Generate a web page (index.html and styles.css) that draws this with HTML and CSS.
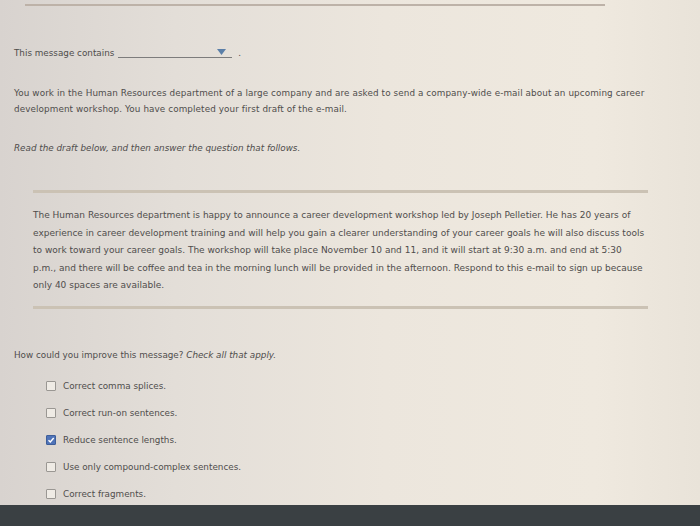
FILE: index.html
```html
<!DOCTYPE html>
<html>
<head>
<meta charset="utf-8">
<link rel="stylesheet" href="styles.css">
</head>
<body>
<div class="screen">
  <div class="page">
    <div class="top-rule"></div>
    <p class="prompt">This message contains <span class="select"><svg class="caret" width="9" height="6" viewBox="0 0 9 6"><path d="M0 0h9L4.5 6z" fill="#5b7fa8"/></svg></span> .</p>
    <p class="intro">You work in the Human Resources department of a large company and are asked to send a company-wide e-mail about an upcoming career development workshop. You have completed your first draft of the e-mail.</p>
    <p class="instr">Read the draft below, and then answer the question that follows.</p>
    <div class="draft">
      <div class="rule"></div>
      <p class="email">The Human Resources department is happy to announce a career development workshop led by Joseph Pelletier. He has 20 years of experience in career development training and will help you gain a clearer understanding of your career goals he will also discuss tools to work toward your career goals. The workshop will take place November 10 and 11, and it will start at 9:30 a.m. and end at 5:30 p.m., and there will be coffee and tea in the morning lunch will be provided in the afternoon. Respond to this e-mail to sign up because only 40 spaces are available.</p>
      <div class="rule"></div>
    </div>
    <p class="question">How could you improve this message? <em>Check all that apply.</em></p>
    <ul class="options">
      <li><span class="box"></span>Correct comma splices.</li>
      <li><span class="box"></span>Correct run-on sentences.</li>
      <li><span class="box checked"><svg width="8" height="8" viewBox="0 0 8 8"><path d="M1.5 4.2l1.8 1.8L6.7 2" fill="none" stroke="#fff" stroke-width="1.4"/></svg></span>Reduce sentence lengths.</li>
      <li><span class="box"></span>Use only compound-complex sentences.</li>
      <li><span class="box"></span>Correct fragments.</li>
    </ul>
  </div>
  <div class="bezel"></div>
</div>
</body>
</html>
```
FILE: styles.css
```css
html, body {
  margin: 0;
  padding: 0;
}
body {
  width: 700px;
  height: 526px;
  overflow: hidden;
  font-family: "DejaVu Sans", Verdana, sans-serif;
  color: #4f4d4c;
}
.screen {
  display: flex;
  flex-direction: column;
  height: 526px;
}
.page {
  flex: 1;
  min-height: 0;
  overflow: hidden;
  background: linear-gradient(to right, #d8d3cf 0%, #e3ded8 25%, #ece6dd 55%, #efe9df 85%, #e9e3d9 100%);
  padding: 0 0 0 14px;
  font-size: 8.8px;
}
.top-rule {
  margin: 4px 95px 0 11px;
  height: 2px;
  background: #bdb2a8;
}
p {
  margin: 0;
}
.prompt {
  margin-top: 40px;
  display: flex;
  align-items: flex-end;
  gap: 2px;
}
.select {
  display: inline-flex;
  justify-content: flex-end;
  align-items: center;
  width: 114px;
  height: 12px;
  border-bottom: 1px solid #7d7c7c;
  margin: 0 4px 0 2px;
  padding-right: 6px;
  box-sizing: border-box;
}
.intro {
  margin-top: 27px;
  line-height: 16px;
  width: 650px;
  letter-spacing: 0.1px;
}
.instr {
  margin-top: 26px;
  font-style: italic;
}
.draft {
  margin: 37px 52px 0 19px;
}
.rule {
  height: 3px;
  background: #cbc2b4;
}
.email {
  margin: 14px 3px 11px 0;
  line-height: 17.6px;
  font-size: 9px;
}
.question {
  margin-top: 41px;
}
.options {
  list-style: none;
  margin: 13px 0 0 32px;
  padding: 0;
}
.options li {
  display: flex;
  align-items: center;
  height: 27px;
}
.box {
  display: inline-flex;
  align-items: center;
  justify-content: center;
  width: 8px;
  height: 8px;
  border: 1px solid #9a9793;
  border-radius: 1px;
  background: #efebe5;
  margin-right: 7px;
}
.box.checked {
  background: #4f73b8;
  border-color: #3e5e99;
}
.bezel {
  flex: 0 0 21px;
  background: #3a4043;
}
```
